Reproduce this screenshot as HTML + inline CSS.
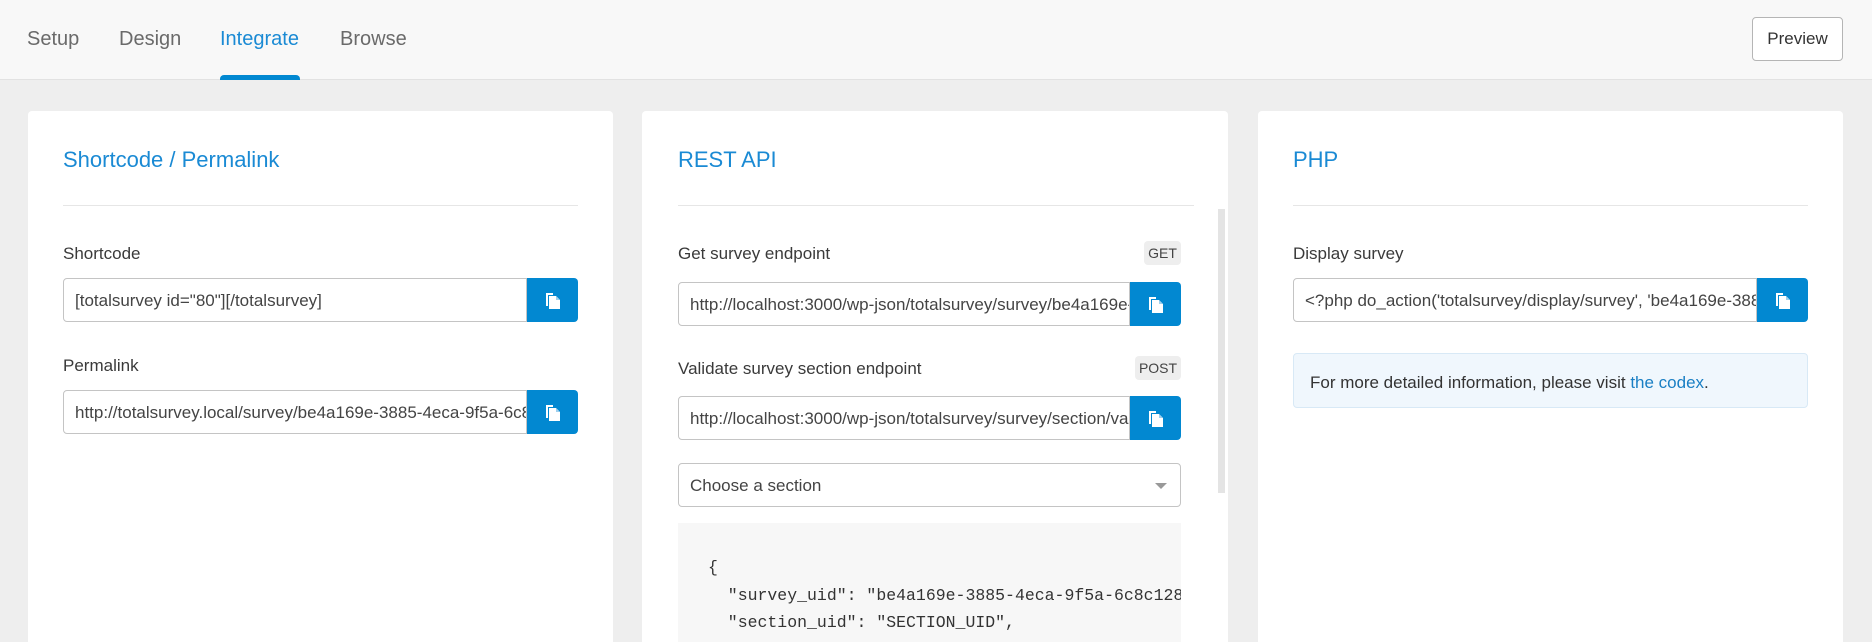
<!DOCTYPE html>
<html style="overflow:hidden;height:642px"><head><meta charset="utf-8"><style>
*{box-sizing:border-box;margin:0;padding:0}
body{width:1872px;height:642px;overflow:hidden;background:#eeeeee;font-family:"Liberation Sans",sans-serif;color:#3c3c3c;position:relative}
.hdr{position:absolute;left:0;top:0;width:1872px;height:80px;background:#f8f8f8;border-bottom:1px solid #e2e2e2}
.tab{position:absolute;top:28px;font-size:20px;color:#6a6a6a}
.tab.on{color:#1a8ad4}
.ul{position:absolute;left:220px;top:75px;width:80px;height:5px;background:#0288d1;border-radius:4px 4px 0 0}
.prev{position:absolute;left:1752px;top:17px;width:91px;height:44px;border:1px solid #b5b5b5;border-radius:4px;background:#fff;font-size:17px;color:#333;text-align:center;line-height:42px}
.card{position:absolute;top:111px;height:531px;background:#fff;border-radius:4px 4px 0 0}
.title{position:absolute;top:147px;font-size:22px;color:#1a8ad4}
.div{position:absolute;top:205px;height:1px;background:#e6e6e6}
.lbl{position:absolute;font-size:17px;color:#3a3a3a}
.inp{position:absolute;height:44px;border:1px solid #c4c4c4;border-radius:4px 0 0 4px;background:#fff;font-size:17px;line-height:44px;padding-left:11px;white-space:nowrap;overflow:hidden;color:#444}
.btn{position:absolute;height:44px;width:51px;background:#0288d1;border-radius:0 4px 4px 0}
.btn svg{position:absolute;left:18px;top:13px}
.badge{position:absolute;height:24px;background:#eee;border-radius:4px;font-size:14px;line-height:24px;text-align:center;color:#444}
pre{font-family:"Liberation Mono",monospace;font-size:16.5px;line-height:27.5px;color:#333}
</style></head><body>
<div class="hdr">
<div class="tab" style="left:27px">Setup</div>
<div class="tab" style="left:119px">Design</div>
<div class="tab on" style="left:220px">Integrate</div>
<div class="tab" style="left:340px">Browse</div>
<div class="ul"></div>
<div class="prev">Preview</div>
</div>

<div class="card" style="left:28px;width:585px"></div>
<div class="title" style="left:63px">Shortcode / Permalink</div>
<div class="div" style="left:63px;width:515px"></div>
<div class="lbl" style="left:63px;top:244px">Shortcode</div>
<div class="inp" style="left:63px;top:278px;width:464px">[totalsurvey id="80"][/totalsurvey]</div>
<div class="btn" style="left:527px;top:278px"><svg width="16" height="18" viewBox="0 0 16 18"><path d="M1 2h7v2H3v11H1z" fill="#fff"/><path d="M4 5h7l4 4v9H4z" fill="#fff"/><path d="M11 5v4h4" fill="#9fd0ee"/></svg></div>
<div class="lbl" style="left:63px;top:356px">Permalink</div>
<div class="inp" style="left:63px;top:390px;width:464px">http://totalsurvey.local/survey/be4a169e-3885-4eca-9f5a-6c8c1282</div>
<div class="btn" style="left:527px;top:390px"><svg width="16" height="18" viewBox="0 0 16 18"><path d="M1 2h7v2H3v11H1z" fill="#fff"/><path d="M4 5h7l4 4v9H4z" fill="#fff"/><path d="M11 5v4h4" fill="#9fd0ee"/></svg></div>

<div class="card" style="left:642px;width:586px"></div>
<div class="title" style="left:678px">REST API</div>
<div class="div" style="left:678px;width:516px"></div>
<div style="position:absolute;left:1218px;top:209px;width:7px;height:284px;background:#e4e4e4"></div>
<div class="lbl" style="left:678px;top:244px">Get survey endpoint</div>
<div class="badge" style="left:1144px;top:241px;width:37px">GET</div>
<div class="inp" style="left:678px;top:282px;width:452px">http://localhost:3000/wp-json/totalsurvey/survey/be4a169e-3885</div>
<div class="btn" style="left:1130px;top:282px"><svg width="16" height="18" viewBox="0 0 16 18"><path d="M1 2h7v2H3v11H1z" fill="#fff"/><path d="M4 5h7l4 4v9H4z" fill="#fff"/><path d="M11 5v4h4" fill="#9fd0ee"/></svg></div>
<div class="lbl" style="left:678px;top:359px">Validate survey section endpoint</div>
<div class="badge" style="left:1135px;top:356px;width:46px">POST</div>
<div class="inp" style="left:678px;top:396px;width:452px">http://localhost:3000/wp-json/totalsurvey/survey/section/validate</div>
<div class="btn" style="left:1130px;top:396px"><svg width="16" height="18" viewBox="0 0 16 18"><path d="M1 2h7v2H3v11H1z" fill="#fff"/><path d="M4 5h7l4 4v9H4z" fill="#fff"/><path d="M11 5v4h4" fill="#9fd0ee"/></svg></div>
<div class="inp" style="left:678px;top:463px;width:503px;border-radius:4px;padding-left:11px">Choose a section</div>
<div style="position:absolute;left:1155px;top:483px;width:0;height:0;border-left:6px solid transparent;border-right:6px solid transparent;border-top:6px solid #999"></div>
<div style="position:absolute;left:678px;top:523px;width:503px;height:119px;background:#f7f7f7;overflow:hidden;padding:31px 0 0 30px"><pre>{
  "survey_uid": "be4a169e-3885-4eca-9f5a-6c8c1282c0a1",
  "section_uid": "SECTION_UID",
  "data": {</pre></div>

<div class="card" style="left:1258px;width:585px"></div>
<div class="title" style="left:1293px">PHP</div>
<div class="div" style="left:1293px;width:515px"></div>
<div class="lbl" style="left:1293px;top:244px">Display survey</div>
<div class="inp" style="left:1293px;top:278px;width:464px">&lt;?php do_action('totalsurvey/display/survey', 'be4a169e-3885-4eca</div>
<div class="btn" style="left:1757px;top:278px"><svg width="16" height="18" viewBox="0 0 16 18"><path d="M1 2h7v2H3v11H1z" fill="#fff"/><path d="M4 5h7l4 4v9H4z" fill="#fff"/><path d="M11 5v4h4" fill="#9fd0ee"/></svg></div>
<div style="position:absolute;left:1293px;top:353px;width:515px;height:55px;background:#f0f7fd;border:1px solid #d8e9f6;border-radius:4px;font-size:17px;line-height:57px;padding-left:16px;color:#333">For more detailed information, please visit <span style="color:#1a7fc4">the codex</span>.</div>
</body></html>
